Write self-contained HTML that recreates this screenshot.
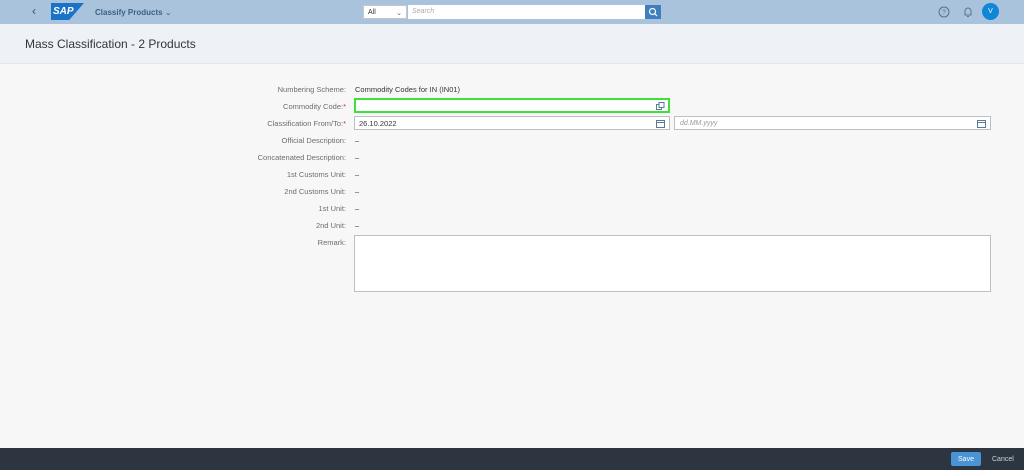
<!DOCTYPE html>
<html><head><style>
*{margin:0;padding:0;box-sizing:border-box}
body{width:1024px;height:470px;overflow:hidden;background:#f7f7f7;font-family:"Liberation Sans",sans-serif;position:relative}
.hdr{position:absolute;left:0;top:0;width:1024px;height:24px;background:#aac3dc}
.title{position:absolute;left:0;top:24px;width:1024px;height:40px;background:#eef1f5;border-bottom:1px solid #e3e6ea}
.ab{position:absolute}
.lbl{position:absolute;right:678px;font-size:7.5px;color:#6a6d70;text-align:right;white-space:nowrap}
.val{position:absolute;left:355px;font-size:7.5px;color:#32363a}
.star{color:#d0302f}
.inp{position:absolute;background:#fff;border:1px solid #b8c0c8}
.foot{position:absolute;left:0;top:448px;width:1024px;height:22px;background:#2c3540}
</style></head><body>
<div class="hdr">
 <div class="ab" style="left:32px;top:4px;font-size:12px;color:#35506d">&#8249;</div>
 <div class="ab" style="left:51px;top:3px;width:33px;height:17px;background:#1a73c7;clip-path:polygon(0 0,100% 0,55% 100%,0 100%)"></div>
 <div class="ab" style="left:53px;top:6px;font-size:10px;font-weight:bold;color:#fff;font-style:italic">SAP</div>
 <div class="ab" style="left:95px;top:8px;font-size:8px;font-weight:bold;color:#3d5f82">Classify Products <span style="font-weight:normal">&#8964;</span></div>
 <div class="ab" style="left:363px;top:5px;width:44px;height:14px;background:#fff;border:1px solid #c0c8d0;font-size:7px;padding:3px 4px;color:#333">All <span style="position:absolute;right:4px;color:#666">&#8964;</span></div>
 <div class="ab" style="left:408px;top:5px;width:237px;height:14px;background:#fff;font-size:7px;padding:3px 4px;color:#aaa;font-style:italic">Search</div>
 <div class="ab" style="left:645px;top:5px;width:16px;height:14px;background:#3f7fbd"><svg width="16" height="14"><circle cx="7.5" cy="6.5" r="3" fill="none" stroke="#fff" stroke-width="1.2"/><line x1="9.8" y1="8.8" x2="12" y2="11" stroke="#fff" stroke-width="1.2"/></svg></div>
 <svg class="ab" style="left:938px;top:6px" width="12" height="12"><circle cx="6" cy="6" r="5" fill="none" stroke="#5a6f86" stroke-width="1"/><text x="6" y="8.5" font-size="7" text-anchor="middle" fill="#5a6f86" font-family="Liberation Sans">?</text></svg>
 <svg class="ab" style="left:962px;top:6px" width="12" height="12"><path d="M3 9V5a3 3 0 0 1 6 0v4H2.5h7M5 10.5h2" fill="none" stroke="#5a6f86" stroke-width="1"/></svg>
 <div class="ab" style="left:982px;top:3px;width:17px;height:17px;border-radius:50%;background:#0f86d6;color:#fff;font-size:7px;text-align:center;line-height:17px">V</div>
</div>
<div class="title"><div class="ab" style="left:25px;top:13px;font-size:12px;color:#32363a">Mass Classification - 2 Products</div></div>

<div class="lbl" style="top:85px">Numbering Scheme:</div><div class="val" style="top:85px">Commodity Codes for IN (IN01)</div>
<div class="lbl" style="top:102px">Commodity Code:<span class="star">*</span></div>
<div class="inp" style="left:354px;top:98px;width:316px;height:15px;border:2px solid #3ee03a"><svg class="ab" style="right:3px;top:2px" width="9" height="8"><rect x="0.5" y="2.5" width="5" height="5" fill="none" stroke="#5a7a99"/><rect x="3" y="0.5" width="5" height="5" fill="#fff" stroke="#5a7a99"/></svg></div>
<div class="lbl" style="top:119px">Classification From/To:<span class="star">*</span></div>
<div class="inp" style="left:354px;top:116px;width:316px;height:14px"><span style="position:absolute;left:4px;top:2px;font-size:7.5px;color:#32363a">26.10.2022</span><svg class="ab" style="right:4px;top:2px" width="9" height="9"><rect x="0.5" y="1.5" width="8" height="7" fill="none" stroke="#5a7a99"/><line x1="0" y1="3.5" x2="9" y2="3.5" stroke="#5a7a99"/></svg></div>
<div class="inp" style="left:674px;top:116px;width:317px;height:14px"><span style="position:absolute;left:5px;top:3px;font-size:7px;color:#999;font-style:italic">dd.MM.yyyy</span><svg class="ab" style="right:4px;top:2px" width="9" height="9"><rect x="0.5" y="1.5" width="8" height="7" fill="none" stroke="#5a7a99"/><line x1="0" y1="3.5" x2="9" y2="3.5" stroke="#5a7a99"/></svg></div>
<div class="lbl" style="top:136px">Official Description:</div><div class="val" style="top:136px">–</div>
<div class="lbl" style="top:153px">Concatenated Description:</div><div class="val" style="top:153px">–</div>
<div class="lbl" style="top:170px">1st Customs Unit:</div><div class="val" style="top:170px">–</div>
<div class="lbl" style="top:187px">2nd Customs Unit:</div><div class="val" style="top:187px">–</div>
<div class="lbl" style="top:204px">1st Unit:</div><div class="val" style="top:204px">–</div>
<div class="lbl" style="top:221px">2nd Unit:</div><div class="val" style="top:221px">–</div>
<div class="lbl" style="top:238px">Remark:</div>
<div class="inp" style="left:354px;top:235px;width:637px;height:57px"></div>

<div class="foot">
 <div class="ab" style="left:951px;top:4px;width:30px;height:14px;background:#4a94d6;border-radius:2px;color:#fff;font-size:7px;text-align:center;line-height:15px">Save</div>
 <div class="ab" style="left:992px;top:8px;font-size:7px;color:#c9d6e3">Cancel</div>
</div>
</body></html>
